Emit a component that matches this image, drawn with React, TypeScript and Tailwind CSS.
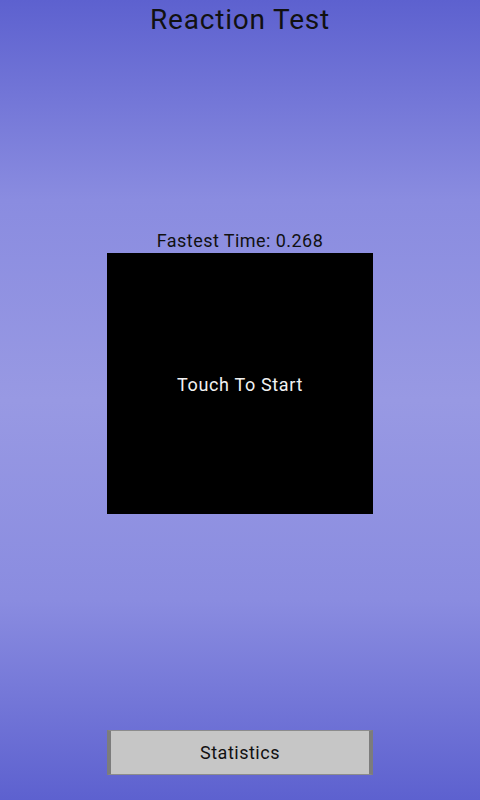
export default function App() {
  return (
    <div
      className="flex h-[800px] w-full flex-col items-center bg-[linear-gradient(to_bottom,#5d61cf_0%,#8a8ce0_25%,#9899e3_50%,#8a8ce0_75%,#5d61cf_100%)]"
      style={{ fontFamily: "Roboto, 'Noto Sans', sans-serif" }}
    >
      <h1 className="text-[28px] leading-[40px] tracking-[0.8px] text-[#111]">Reaction Test</h1>

      <p className="mt-[189px] text-[18px] leading-[24px] tracking-[0.45px] text-[#111]">Fastest Time: 0.268</p>
      <div className="flex h-[261px] w-[266px] items-center justify-center bg-black">
        <span className="mt-[3px] text-[18px] leading-[24px] tracking-[0.65px] text-[#f2f2f2]">Touch To Start</span>
      </div>

      <button className="mt-auto mb-[25px] h-[45px] w-[266px] border-x-4 border-y border-x-[#7c7c7c] border-y-[#8c8c8c] bg-[#c6c6c6] text-[18px] tracking-[0.5px] text-[#111]">
        Statistics
      </button>
    </div>
  );
}
